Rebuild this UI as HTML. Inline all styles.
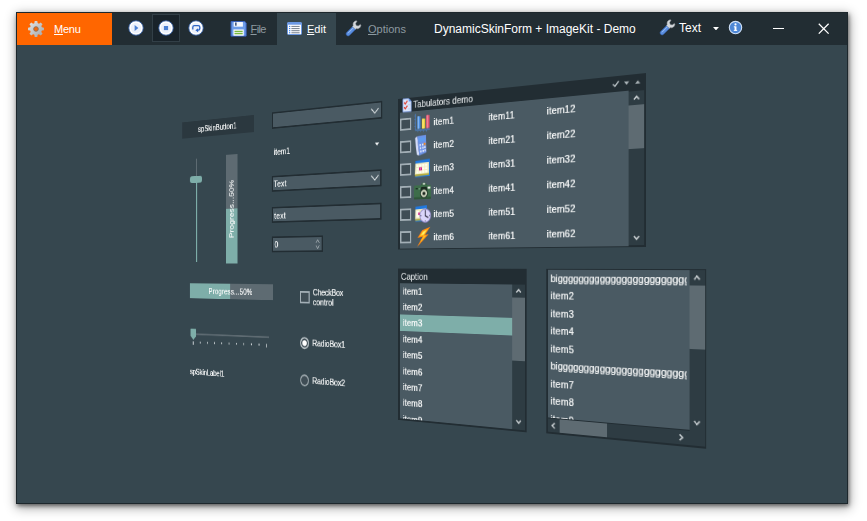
<!DOCTYPE html>
<html><head><meta charset="utf-8">
<style>
html,body{margin:0;padding:0;background:#fff;}
body{width:867px;height:521px;position:relative;overflow:hidden;font-family:"Liberation Sans",sans-serif;font-size:11px;color:#eef1f2;}
#win{position:absolute;left:16px;top:12px;width:830px;height:490px;border:1px solid #1d272c;background:#36474f;box-shadow:1px 2px 4px rgba(0,0,0,.5),1px 3px 11px 1px rgba(0,0,0,.33);}
#tb{position:absolute;left:-1px;top:-1px;width:832px;height:33px;}
#tbb{position:absolute;left:0;top:0;width:830px;height:32px;background:#222d33;}
#tb .a{position:absolute;}
#menu{left:1px;top:1px;width:95px;height:32px;background:#ff6600;}
.tt{position:absolute;top:10px;font-size:11px;line-height:15px;white-space:nowrap;color:#fff;}
.tt u{text-decoration:underline;text-underline-offset:1px;}
.gr{color:#8d9aa0;}
#scene{position:absolute;left:0;top:0;width:0;height:0;transform-origin:0 0;transform:matrix3d(0.44160088,-0.098508052,0,-0.00037101358,-2.4585075e-17,0.73658036,0,-8.1226847e-20,0,0,1,0,162.29428,108.97948,0,1);}
#scene div,#scene svg,#scene span{position:absolute;box-sizing:border-box;}
.pn{background:#222d33;}
.ls{background:#4a5a63;overflow:hidden;}
.tr{background:#2e3c43;}
.th{background:#5e6b72;}
.t{white-space:nowrap;line-height:13px;height:13px;color:#fbfcfc;-webkit-text-stroke:.22px #fbfcfc;}
.ed{background:#4a5a63;border:2px solid #222d33;}
.teal{background:#7eaea9;}
.gy{background:#5e6b72;}
</style></head><body>
<div id="win">
 <div id="tbb"></div>
 <div id="tb">
  <div class="a" id="menu"></div>
  <svg class="a" style="left:11px;top:7.600px" width="18" height="18" viewBox="0 0 18 18"><defs><linearGradient id="gg" x1="0" y1="0" x2="1" y2="1"><stop offset="0" stop-color="#e6e8e9"/><stop offset="1" stop-color="#a2a4a6"/></linearGradient></defs><path fill="url(#gg)" d="M7.700 1h2.600l.35 2.100 1.300.55 1.750-1.250 1.850 1.850-1.250 1.750.55 1.300 2.100.35v2.600l-2.100.35-.55 1.300 1.250 1.750-1.850 1.850-1.750-1.250-1.300.55-.35 2.100H7.700l-.35-2.100-1.300-.55-1.750 1.250-1.850-1.850 1.250-1.750-.55-1.300L1.050 10.300V7.700l2.100-.35.55-1.300L2.450 4.300 4.300 2.450l1.750 1.250 1.300-.55z"/><circle cx="9" cy="9" r="2.300" fill="#f26a10" stroke="#8a6e58" stroke-width=".9"/></svg>
  <span class="tt" style="left:38px;letter-spacing:-.25px"><u>M</u>enu</span>
  <svg class="a" style="left:112px;top:7.700px" width="16" height="16" viewBox="0 0 16 16"><circle cx="8" cy="8" r="7.250" fill="#ffffff" stroke="#2a569c" stroke-width=".9"/><circle cx="8" cy="8" r="5.200" fill="#ecf1fb"/><path d="M6.600 5L10.400 8 6.600 11z" fill="#4a7fd2"/></svg>
  <div class="a" style="left:136px;top:2px;width:28px;height:28px;background:#19232a;border:1px solid #323f47;box-sizing:border-box"></div>
  <svg class="a" style="left:142px;top:7.700px" width="16" height="16" viewBox="0 0 16 16"><circle cx="8" cy="8" r="7.250" fill="#ffffff" stroke="#2a569c" stroke-width=".9"/><circle cx="8" cy="8" r="5.200" fill="#ecf1fb"/><rect x="5.900" y="6" width="4.200" height="4.100" fill="#4a7fd2"/></svg>
  <svg class="a" style="left:172px;top:7.700px" width="16" height="16" viewBox="0 0 16 16"><circle cx="8" cy="8" r="7.250" fill="#ffffff" stroke="#2a569c" stroke-width=".9"/><circle cx="8" cy="8" r="5.200" fill="#ecf1fb"/><path d="M4.800 9.600V7.200A1.600 1.600 0 0 1 6.400 5.600H10.200A1.600 1.600 0 0 1 11.800 7.200V8.600A1.600 1.600 0 0 1 10.200 10.200H9.800" fill="none" stroke="#2f66c4" stroke-width="1.300"/><path d="M10.100 8.300L7.400 10.300l2.700 2z" fill="#2f66c4"/></svg>
  <svg class="a" style="left:213.700px;top:8.200px" width="17.200" height="17.200" viewBox="0 0 16 16"><path d="M1 1.500h12.800L15 2.700V15H1z" fill="#6d9ce8" stroke="#3a62c2" stroke-width=".9"/><rect x="3.400" y="1.900" width="8.600" height="4.300" fill="#f3f7fd"/><rect x="4.800" y="2.300" width="1.300" height="3" fill="#2a3f6a"/><rect x="3.200" y="8.800" width="9.600" height="5.800" fill="#fbfcfe"/><rect x="4.200" y="10" width="7.600" height="1.300" fill="#78b840"/><rect x="4.200" y="12" width="7.600" height="1.300" fill="#78b840"/></svg>
  <span class="tt gr" style="left:234.500px;letter-spacing:-.6px"><u>F</u>ile</span>
  <div class="a" style="left:261px;top:1px;width:59px;height:32px;background:#36474f"></div>
  <svg class="a" style="left:271px;top:9.700px" width="15" height="13" viewBox="0 0 15 13"><rect x=".5" y=".5" width="14" height="12" rx="1" fill="#fbfcff" stroke="#6a98e4" stroke-width="1"/><rect x=".5" y=".5" width="14" height="2.200" fill="#6a98e4"/><rect x="2" y="3.9" width="1.300" height="1.100" fill="#3b82e8"/><rect x="4.400" y="3.9" width="8.200" height="1.100" fill="#7f8996"/><rect x="2" y="6" width="1.300" height="1.100" fill="#3b82e8"/><rect x="4.400" y="6" width="8.200" height="1.100" fill="#7f8996"/><rect x="2" y="8.1" width="1.300" height="1.100" fill="#3b82e8"/><rect x="4.400" y="8.1" width="8.200" height="1.100" fill="#7f8996"/><rect x="2" y="10.2" width="1.300" height="1.100" fill="#3b82e8"/><rect x="4.400" y="10.2" width="8.200" height="1.100" fill="#7f8996"/></svg>
  <span class="tt" style="left:291px"><u>E</u>dit</span>
  <svg class="a" style="left:329px;top:8px" width="17" height="17" viewBox="0 0 17 17"><path d="M1.700 12.500L8 6.200l2.800 2.800-6.300 6.300a1.980 1.980 0 0 1-2.800-2.800z" fill="#5a8ee0" stroke="#3b6cc0" stroke-width=".6"/><path d="M3 13.200L8.600 7.600" stroke="#9cc0f4" stroke-width="1" fill="none"/><path d="M8.200 5.400C7.500 3.500 8.600 1.500 10.900.8l1.200.3-1.500 2.400.6 1.900 2 .6 2.200-1.600.5 1.200C15.500 8.100 13.300 9.400 11.200 8.600l-.8.700-2.900-2.900z" fill="#d3d7db" stroke="#8f959b" stroke-width=".5"/></svg>
  <span class="tt gr" style="left:352px"><u>O</u>ptions</span>
  <span class="tt" id="title" style="left:418px;font-size:12px">DynamicSkinForm + ImageKit - Demo</span>
  <svg class="a" style="left:643px;top:7px" width="17" height="17" viewBox="0 0 17 17"><path d="M1.700 12.500L8 6.200l2.800 2.800-6.300 6.300a1.980 1.980 0 0 1-2.800-2.800z" fill="#5a8ee0" stroke="#3b6cc0" stroke-width=".6"/><path d="M3 13.200L8.600 7.600" stroke="#9cc0f4" stroke-width="1" fill="none"/><path d="M8.200 5.400C7.500 3.500 8.600 1.500 10.900.8l1.200.3-1.500 2.400.6 1.900 2 .6 2.200-1.600.5 1.200C15.500 8.100 13.300 9.400 11.200 8.600l-.8.700-2.900-2.900z" fill="#d3d7db" stroke="#8f959b" stroke-width=".5"/></svg>
  <span class="tt" style="left:663px;font-size:12px;top:9px">Text</span>
  <svg class="a" style="left:696.500px;top:15px" width="6" height="3.400" viewBox="0 0 7 4"><path d="M0 0h7L3.500 4z" fill="#fff"/></svg>
  <svg class="a" style="left:712.300px;top:8px" width="15" height="15" viewBox="0 0 16 16"><circle cx="8" cy="8" r="6.600" fill="#4d87d6" stroke="#cfe0f7" stroke-width="1.200"/><rect x="7" y="6.800" width="2" height="4.600" fill="#fff"/><rect x="6.200" y="6.800" width="1.600" height="1" fill="#fff"/><rect x="6.200" y="10.600" width="3.600" height="1" fill="#fff"/><circle cx="8" cy="4.700" r="1.150" fill="#fff"/></svg>
  <div class="a" style="left:757px;top:15.500px;width:10.500px;height:1.300px;background:#fff"></div>
  <svg class="a" style="left:802.300px;top:10.700px" width="11.400" height="11.400" viewBox="0 0 12 12"><path d="M.8.800l10.400 10.400M11.200.800L.8 11.200" stroke="#fff" stroke-width="1.300" fill="none"/></svg>
 </div>
</div>
<div id="scene">
<div class="" style="left:39px;top:21px;width:132px;height:21.5px;background:#2b383f;"></div>
<span class="t" style="left:39px;top:26px;width:132px;text-align:center;">spSkinButton1</span>
<div class="ed" style="left:202px;top:20.4px;width:174.6px;height:20.6px;"></div>
<span class="t" style="left:205.5px;top:64.0px;">item1</span>
<div class="ed" style="left:202px;top:99.6px;width:174.4px;height:20.2px;"></div>
<span class="t" style="left:205px;top:103.5px;letter-spacing:.5px;">Text</span>
<div class="ed" style="left:202px;top:139.2px;width:174.4px;height:20.3px;"></div>
<span class="t" style="left:206px;top:143.5px;letter-spacing:.5px;">text</span>
<div class="ed" style="left:202px;top:176.3px;width:84.4px;height:20.2px;"></div>
<span class="t" style="left:206.5px;top:180.2px;">0</span>
<div class="gy" style="left:66px;top:70.7px;width:1.2px;height:27px;"></div>
<div class="teal" style="left:65.6px;top:98px;width:2.2px;height:109.6px;"></div>
<div class="teal" style="left:54.3px;top:94.2px;width:22.8px;height:9.2px;border-radius:4px;"></div>
<div class="gy" style="left:121px;top:69px;width:20.5px;height:70px;"></div>
<div class="teal" style="left:121px;top:139px;width:20.5px;height:71px;"></div>
<span class="t" style="left:121px;top:210px;width:141px;height:20.5px;line-height:20.5px;text-align:center;transform-origin:0 0;transform:rotate(-90deg);">Progress...50%</span>
<div class="gy" style="left:54px;top:235.5px;width:150px;height:20px;"></div>
<div class="teal" style="left:54px;top:235.5px;width:74.7px;height:20px;"></div>
<span class="t" style="left:54px;top:235.5px;width:150px;height:20px;line-height:20px;text-align:center;letter-spacing:.3px;">Progress...50%</span>
<span class="t" style="left:54px;top:346.5px;letter-spacing:-.2px;">spSkinLabel1</span>
<div class="" style="left:249px;top:243.8px;width:15.8px;height:15px;border:2.3px solid #a3afb6;background:#3f4d55;"></div>
<span class="t" style="left:270px;top:238.5px;letter-spacing:-.3px;">CheckBox</span>
<span class="t" style="left:270px;top:250.5px;">control</span>
<span class="t" style="left:269px;top:300.8px;letter-spacing:-.25px;">RadioBox1</span>
<span class="t" style="left:269px;top:346.5px;letter-spacing:-.25px;">RadioBox2</span>
<div class="pn" style="left:400px;top:20px;width:310px;height:174px;"></div>
<div class="ls" style="left:402.5px;top:36px;width:288.5px;height:156.5px;"></div>
<div class="tr" style="left:691.3px;top:36.5px;width:16.6px;height:155.5px;"></div>
<div class="th" style="left:691.3px;top:50.5px;width:16.6px;height:44px;"></div>
<span class="t" style="left:422px;top:22.0px;-webkit-text-stroke:.1px #e4e8ea;color:#e4e8ea;">Tabulators demo</span>
<div class="" style="left:403.2px;top:42.5px;width:15.8px;height:14.8px;border:2.3px solid #a3afb6;background:#3f4d55;"></div>
<span class="t" style="left:450.3px;top:43.7px;letter-spacing:.2px;">item1</span>
<span class="t" style="left:523.7px;top:43.5px;letter-spacing:.2px;">item11</span>
<span class="t" style="left:596.5px;top:43.3px;letter-spacing:.2px;">item12</span>
<div class="" style="left:403.2px;top:68.5px;width:15.8px;height:14.8px;border:2.3px solid #a3afb6;background:#3f4d55;"></div>
<span class="t" style="left:450.3px;top:69.7px;letter-spacing:.2px;">item2</span>
<span class="t" style="left:523.7px;top:69.5px;letter-spacing:.2px;">item21</span>
<span class="t" style="left:596.5px;top:69.3px;letter-spacing:.2px;">item22</span>
<div class="" style="left:403.2px;top:94.5px;width:15.8px;height:14.8px;border:2.3px solid #a3afb6;background:#3f4d55;"></div>
<span class="t" style="left:450.3px;top:95.7px;letter-spacing:.2px;">item3</span>
<span class="t" style="left:523.7px;top:95.5px;letter-spacing:.2px;">item31</span>
<span class="t" style="left:596.5px;top:95.3px;letter-spacing:.2px;">item32</span>
<div class="" style="left:403.2px;top:120.5px;width:15.8px;height:14.8px;border:2.3px solid #a3afb6;background:#3f4d55;"></div>
<span class="t" style="left:450.3px;top:121.7px;letter-spacing:.2px;">item4</span>
<span class="t" style="left:523.7px;top:121.5px;letter-spacing:.2px;">item41</span>
<span class="t" style="left:596.5px;top:121.3px;letter-spacing:.2px;">item42</span>
<div class="" style="left:403.2px;top:146.5px;width:15.8px;height:14.8px;border:2.3px solid #a3afb6;background:#3f4d55;"></div>
<span class="t" style="left:450.3px;top:147.7px;letter-spacing:.2px;">item5</span>
<span class="t" style="left:523.7px;top:147.5px;letter-spacing:.2px;">item51</span>
<span class="t" style="left:596.5px;top:147.3px;letter-spacing:.2px;">item52</span>
<div class="" style="left:403.2px;top:172.5px;width:15.8px;height:14.8px;border:2.3px solid #a3afb6;background:#3f4d55;"></div>
<span class="t" style="left:450.3px;top:173.7px;letter-spacing:.2px;">item6</span>
<span class="t" style="left:523.7px;top:173.5px;letter-spacing:.2px;">item61</span>
<span class="t" style="left:596.5px;top:173.3px;letter-spacing:.2px;">item62</span>
<div class="pn" style="left:400px;top:216.3px;width:172px;height:174.3px;"></div>
<div class="ls" style="left:402.9px;top:232.5px;width:151.1px;height:156px;"><div class="" style="left:0;top:0.0px;width:151px;height:18.4px;"></div><span class="t" style="left:4px;top:3.0px;letter-spacing:.2px;">item1</span><div class="" style="left:0;top:18.4px;width:151px;height:18.4px;"></div><span class="t" style="left:4px;top:21.4px;letter-spacing:.2px;">item2</span><div class="teal" style="left:0;top:36.8px;width:151px;height:18.4px;"></div><span class="t" style="left:4px;top:39.8px;letter-spacing:.2px;">item3</span><div class="" style="left:0;top:55.2px;width:151px;height:18.4px;"></div><span class="t" style="left:4px;top:58.2px;letter-spacing:.2px;">item4</span><div class="" style="left:0;top:73.6px;width:151px;height:18.4px;"></div><span class="t" style="left:4px;top:76.6px;letter-spacing:.2px;">item5</span><div class="" style="left:0;top:92.0px;width:151px;height:18.4px;"></div><span class="t" style="left:4px;top:95.0px;letter-spacing:.2px;">item6</span><div class="" style="left:0;top:110.4px;width:151px;height:18.4px;"></div><span class="t" style="left:4px;top:113.4px;letter-spacing:.2px;">item7</span><div class="" style="left:0;top:128.8px;width:151px;height:18.4px;"></div><span class="t" style="left:4px;top:131.8px;letter-spacing:.2px;">item8</span><div class="" style="left:0;top:147.2px;width:151px;height:18.4px;"></div><span class="t" style="left:4px;top:150.2px;letter-spacing:.2px;">item9</span></div>
<div class="tr" style="left:554px;top:232.5px;width:16px;height:156px;"></div>
<div class="th" style="left:554px;top:247.2px;width:16px;height:68.1px;"></div>
<span class="t" style="left:404.2px;top:219.0px;-webkit-text-stroke:0;color:#e4e8ea;">Caption</span>
<div class="pn" style="left:596px;top:215.5px;width:177.3px;height:174px;"></div>
<div class="ls" style="left:598.2px;top:217.3px;width:157.4px;height:156.2px;"><div style="left:0;top:0;width:154.4px;height:156.2px;overflow:hidden;"><span class="t" style="left:3px;top:2.5px;letter-spacing:0px;">bigggggggggggggggggggggggggggggggggg</span><span class="t" style="left:3px;top:21.0px;letter-spacing:0.2px;">item2</span><span class="t" style="left:3px;top:39.5px;letter-spacing:0.2px;">item3</span><span class="t" style="left:3px;top:58.0px;letter-spacing:0.2px;">item4</span><span class="t" style="left:3px;top:76.5px;letter-spacing:0.2px;">item5</span><span class="t" style="left:3px;top:95.0px;letter-spacing:0px;">bigggggggggggggggggggggggggggggggggg</span><span class="t" style="left:3px;top:113.5px;letter-spacing:0.2px;">item7</span><span class="t" style="left:3px;top:132.0px;letter-spacing:0.2px;">item8</span><span class="t" style="left:3px;top:150.5px;letter-spacing:0.2px;">item9</span></div></div>
<div class="tr" style="left:755.6px;top:217.3px;width:16.3px;height:170.7px;"></div>
<div class="th" style="left:755.6px;top:231.5px;width:16.3px;height:62.2px;"></div>
<div class="tr" style="left:598.2px;top:373.5px;width:158px;height:14.5px;"></div>
<div class="th" style="left:612.4px;top:373.5px;width:54.9px;height:14.5px;"></div>
<svg style="left:0;top:0;overflow:visible" width="800" height="400" viewBox="0 0 800 400"><path d="M360.5 28.25L366 33.75L371.5 28.25" fill="none" stroke="#dfe4e6" stroke-width="1.2"/><path d="M366.2 68.600h6.200l-3.100 3.400z" fill="#f2f4f5"/><path d="M360.5 106.75L366 112.25L371.5 106.75" fill="none" stroke="#dfe4e6" stroke-width="1.2"/><path d="M275.2 184.6L277.7 181.4L280.2 184.6" fill="none" stroke="#cfd5d8" stroke-width="1"/><path d="M275.2 188.4L277.7 191.6L280.2 188.4" fill="none" stroke="#cfd5d8" stroke-width="1"/><path d="M65 303.600L197 302.700" stroke="#5e6b72" stroke-width="2"/><path d="M55.4 296.700h10.300v9.200l-5.150 5z l0 0 M55.400 296.700v9.200l5.150 5" fill="#7eaea9"/><path d="M55.4 296.700h10.300v9.200l-5.150 5l-5.150-5z" fill="#7eaea9"/><path d="M60.2 313.2v4.6" stroke="#e6eaec" stroke-width="1.4"/><path d="M73.5 313.0v2.6" stroke="#e6eaec" stroke-width="1.4"/><path d="M86.8 312.8v2.6" stroke="#e6eaec" stroke-width="1.4"/><path d="M100.1 312.6v2.6" stroke="#e6eaec" stroke-width="1.4"/><path d="M113.4 312.4v2.6" stroke="#e6eaec" stroke-width="1.4"/><path d="M126.7 312.2v2.6" stroke="#e6eaec" stroke-width="1.4"/><path d="M140.0 312.0v2.6" stroke="#e6eaec" stroke-width="1.4"/><path d="M153.3 311.8v2.6" stroke="#e6eaec" stroke-width="1.4"/><path d="M166.6 311.6v2.6" stroke="#e6eaec" stroke-width="1.4"/><path d="M179.9 311.4v2.6" stroke="#e6eaec" stroke-width="1.4"/><path d="M193.2 311.2v4.6" stroke="#e6eaec" stroke-width="1.4"/><circle cx="256.500" cy="307.800" r="6.400" fill="#3f4d55" stroke="#b9c2c6" stroke-width="1.900"/><circle cx="256.500" cy="307.800" r="3.600" fill="#fff"/><circle cx="256.500" cy="353.600" r="6.400" fill="#3f4d55" stroke="#98a3a8" stroke-width="1.900"/><path d="M696.9000000000001 45.6L699.7 42.4L702.5 45.6" fill="none" stroke="#c9cfd2" stroke-width="1.5"/><path d="M696.9000000000001 182.9L699.7 186.1L702.5 182.9" fill="none" stroke="#c9cfd2" stroke-width="1.5"/><path d="M673.600 28l2.300 2.200L680 25.200" fill="none" stroke="#b4bcc0" stroke-width="1.500"/><path d="M686 26.500h5.600l-2.800 3.400z" fill="#aab3b7"/><path d="M698.200 29.800h5.600l-2.800-3.400z" fill="#aab3b7"/><g transform="translate(406.500,20.300)"><path d="M.5 .5H9L12.500 4V15.500H.5z" fill="#d9e5fb" stroke="#7f9fe0" stroke-width="1"/>
<path d="M9 .5V4H12.500z" fill="#5f8fe8"/>
<path d="M2.500 4.500l1.500 1.800 3-3.300M2.500 10l1.500 1.800 3-3.300" fill="none" stroke="#e0301e" stroke-width="1.400"/>
<rect x="8" y="7" width="3" height="1" fill="#b9c8e8"/><rect x="8" y="12" width="3" height="1" fill="#b9c8e8"/></g><g transform="translate(422.400,37.5)"><path d="M2.500 1.500V20.500H22.500" fill="none" stroke="#4a86d8" stroke-width="1"/>
<path d="M1.200 4h1.300M1.200 8h1.300M1.200 12h1.300M1.200 16h1.300M6 22.800v-1.300M10 22.800v-1.300M14 22.800v-1.300M18 22.800v-1.300" stroke="#4a86d8" stroke-width=".7"/>
<rect x="5" y="4.800" width="4.600" height="14.200" fill="#4b8fe2"/><rect x="6" y="4.800" width="1.500" height="14.200" fill="#8fbdf0"/>
<rect x="11.500" y="8" width="4.600" height="11" fill="#f3d53a"/><rect x="12.500" y="8" width="1.500" height="11" fill="#f9e98a"/>
<rect x="17.600" y="4.300" width="4.600" height="14.700" fill="#df5470"/><rect x="18.500" y="4.300" width="1.500" height="14.700" fill="#ee8fa1"/></g><g transform="translate(422.400,63.5)"><path d="M2 3.500L5 1.500 8 23.500 4.500 22.500z" fill="#d4dcf9"/>
<path d="M5 1.500L17.500 0.500 18 20.500 8 23.500z" fill="#6d92e6"/>
<path d="M7 3.500L16.200 2.700 16.400 7.500 7.600 8.600z" fill="#5f9cf0"/>
<g fill="#dfe6fb"><rect x="8.200" y="10.600" width="2.200" height="2.200"/><rect x="11.600" y="10.200" width="2.200" height="2.200"/><rect x="8.600" y="14.200" width="2.200" height="2.200"/><rect x="12" y="13.800" width="2.200" height="2.200"/><rect x="14.800" y="13.300" width="2" height="2.200"/><rect x="9" y="17.900" width="2.200" height="2.200"/><rect x="12.400" y="17.400" width="2.200" height="2.200"/><rect x="15.200" y="16.800" width="2" height="2.200"/></g>
<rect x="14.300" y="9.400" width="2.600" height="2.700" fill="#f08a24"/></g><g transform="translate(422.400,89.5)"><path d="M2.500 3.500L22.500 2V21.600L2.500 22.200z" fill="#1f78e0"/>
<path d="M2.500 6.500L21.500 5.500V18.500L1.500 19.500z" fill="#f1edc2"/>
<path d="M1.500 19L21.500 18V20.300L2 21.200z" fill="#b9ae3e"/>
<g fill="#fffef2"><rect x="4" y="8" width="3" height="2.600"/><rect x="8" y="7.800" width="3" height="2.600"/><rect x="12" y="7.600" width="3" height="2.600"/><rect x="16" y="7.400" width="3" height="2.600"/><rect x="4" y="11.600" width="3" height="2.600"/><rect x="12" y="11.200" width="3" height="2.600"/><rect x="16" y="11" width="3" height="2.600"/><rect x="4" y="15.200" width="3" height="2.600"/><rect x="8" y="15" width="3" height="2.600"/><rect x="12" y="14.800" width="3" height="2.600"/><rect x="16" y="14.600" width="3" height="2.600"/></g>
<rect x="7.600" y="11" width="4" height="3.600" fill="#d0268a"/><rect x="8.800" y="12.200" width="1.800" height="1.200" fill="#f6b3da"/></g><g transform="translate(422.400,115.5)"><path d="M10.500 5.800Q10.500 3 13.500 3h2Q18.500 3 18.500 5.800z" fill="#34603f"/>
<rect x="12.800" y="3.300" width="3.400" height="1.700" rx=".85" fill="#e9f1e6"/>
<rect x=".5" y="5.500" width="24" height="16" rx="1.500" fill="#3d6d4a"/>
<rect x=".5" y="19" width="24" height="2.500" rx="1" fill="#2f5639"/>
<rect x="19.500" y="7.500" width="4" height="2.400" rx=".8" fill="#f2f6f0"/>
<rect x="3" y="8.500" width="3" height="1.500" fill="#1d3525"/><rect x="7" y="9" width="2" height="1" fill="#9db8a2"/>
<path d="M11 7.500h7l1.500 4.500h-10z" fill="#1b2a20"/>
<circle cx="14.500" cy="15" r="5.400" fill="#22382a"/>
<circle cx="14.500" cy="15" r="4.200" fill="#d8dcc6"/>
<circle cx="14.500" cy="15" r="2.600" fill="#8f9a84"/>
<circle cx="14.500" cy="15" r="1.600" fill="#141d17"/></g><g transform="translate(422.400,141.5)"><path d="M2.500 4L18.500 2.600V20.500L2.500 21z" fill="#1f78e0"/>
<path d="M2.500 7L17.500 6V17.500L2 18.300z" fill="#f1edc2"/>
<path d="M2 18L17.500 17V19.300L2.500 20z" fill="#b9ae3e"/>
<rect x="4" y="8.500" width="3.500" height="7.500" fill="#fffef2"/><rect x="6.500" y="10.500" width="2" height="3" fill="#d0268a"/>
<circle cx="16.300" cy="14.300" r="8.100" fill="#8e84c8"/>
<circle cx="16.300" cy="14.300" r="7.100" fill="#dad5fa"/>
<path d="M16.300 8.300V14.300L20.800 16.800" fill="none" stroke="#1c1a2e" stroke-width="1.300"/>
<path d="M16.300 7.600v1.200M16.300 19.800v1.200M9.700 14.300h1.200M21.700 14.300h1.200" stroke="#2b2850" stroke-width="1"/></g><g transform="translate(422.400,167.5)"><path d="M23.200 1.200L12 4.800 5.600 13.600 12.400 12.200 4.800 24 21 9.400 16 10.300z" fill="#ff8410"/>
<path d="M20.500 3.200L12.800 6 8 12 14.600 10.600 8.500 19.600 17.800 10.800 13.500 11.300z" fill="#ffc81e"/>
<path d="M18 4.800L13.400 6.800 10.500 10.400 14.500 9.500z" fill="#fff06a"/></g><path d="M559.2 241.6L562 238.4L564.8 241.6" fill="none" stroke="#c9cfd2" stroke-width="1.5"/><path d="M559.2 378.9L562 382.1L564.8 378.9" fill="none" stroke="#c9cfd2" stroke-width="1.5"/><path d="M760.9000000000001 226.2L763.7 223.0L766.5 226.2" fill="none" stroke="#c9cfd2" stroke-width="1.5"/><path d="M760.9000000000001 364.0L763.7 367.20000000000005L766.5 364.0" fill="none" stroke="#c9cfd2" stroke-width="1.5"/><path d="M606.2 378.4L603.0 381.2L606.2 384.0" fill="none" stroke="#c9cfd2" stroke-width="1.5"/><path d="M745.6 378.4L748.8000000000001 381.2L745.6 384.0" fill="none" stroke="#c9cfd2" stroke-width="1.5"/></svg>
</div>
</body></html>
